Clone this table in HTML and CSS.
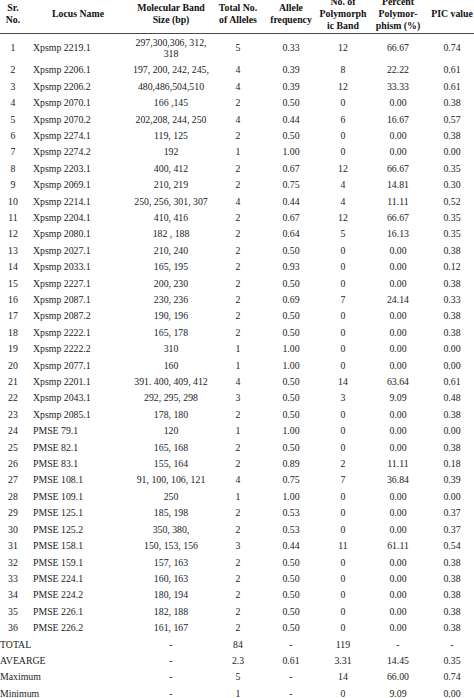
FILE: index.html
```html
<!DOCTYPE html>
<html>
<head>
<meta charset="utf-8">
<link rel="stylesheet" href="styles.css">
</head>
<body>
<table class="data">
<colgroup>
<col class="c-sr"><col class="c-locus"><col class="c-band"><col class="c-total"><col class="c-freq"><col class="c-poly"><col class="c-pct"><col class="c-pic">
</colgroup>
<thead>
<tr>
<th>Sr.<br>No.</th>
<th>Locus Name</th>
<th>Molecular Band<br>Size (bp)</th>
<th>Total No.<br>of Alleles</th>
<th>Allele<br>frequency</th>
<th>No. of<br>Polymorph<br>ic Band</th>
<th>Percent<br>Polymor-<br>phism (%)</th>
<th>PIC value</th>
</tr>
</thead>
<tbody>
<tr><td>1</td><td class="name">Xpsmp 2219.1</td><td>297,300,306, 312,<br>318</td><td>5</td><td>0.33</td><td>12</td><td>66.67</td><td>0.74</td></tr>
<tr><td>2</td><td class="name">Xpsmp 2206.1</td><td>197, 200, 242, 245,</td><td>4</td><td>0.39</td><td>8</td><td>22.22</td><td>0.61</td></tr>
<tr><td>3</td><td class="name">Xpsmp 2206.2</td><td>480,486,504,510</td><td>4</td><td>0.39</td><td>12</td><td>33.33</td><td>0.61</td></tr>
<tr><td>4</td><td class="name">Xpsmp 2070.1</td><td>166 ,145</td><td>2</td><td>0.50</td><td>0</td><td>0.00</td><td>0.38</td></tr>
<tr><td>5</td><td class="name">Xpsmp 2070.2</td><td>202,208, 244, 250</td><td>4</td><td>0.44</td><td>6</td><td>16.67</td><td>0.57</td></tr>
<tr><td>6</td><td class="name">Xpsmp 2274.1</td><td>119, 125</td><td>2</td><td>0.50</td><td>0</td><td>0.00</td><td>0.38</td></tr>
<tr><td>7</td><td class="name">Xpsmp 2274.2</td><td>192</td><td>1</td><td>1.00</td><td>0</td><td>0.00</td><td>0.00</td></tr>
<tr><td>8</td><td class="name">Xpsmp 2203.1</td><td>400, 412</td><td>2</td><td>0.67</td><td>12</td><td>66.67</td><td>0.35</td></tr>
<tr><td>9</td><td class="name">Xpsmp 2069.1</td><td>210, 219</td><td>2</td><td>0.75</td><td>4</td><td>14.81</td><td>0.30</td></tr>
<tr><td>10</td><td class="name">Xpsmp 2214.1</td><td>250, 256, 301, 307</td><td>4</td><td>0.44</td><td>4</td><td>11.11</td><td>0.52</td></tr>
<tr><td>11</td><td class="name">Xpsmp 2204.1</td><td>410, 416</td><td>2</td><td>0.67</td><td>12</td><td>66.67</td><td>0.35</td></tr>
<tr><td>12</td><td class="name">Xpsmp 2080.1</td><td>182 , 188</td><td>2</td><td>0.64</td><td>5</td><td>16.13</td><td>0.35</td></tr>
<tr><td>13</td><td class="name">Xpsmp 2027.1</td><td>210, 240</td><td>2</td><td>0.50</td><td>0</td><td>0.00</td><td>0.38</td></tr>
<tr><td>14</td><td class="name">Xpsmp 2033.1</td><td>165, 195</td><td>2</td><td>0.93</td><td>0</td><td>0.00</td><td>0.12</td></tr>
<tr><td>15</td><td class="name">Xpsmp 2227.1</td><td>200, 230</td><td>2</td><td>0.50</td><td>0</td><td>0.00</td><td>0.38</td></tr>
<tr><td>16</td><td class="name">Xpsmp 2087.1</td><td>230, 236</td><td>2</td><td>0.69</td><td>7</td><td>24.14</td><td>0.33</td></tr>
<tr><td>17</td><td class="name">Xpsmp 2087.2</td><td>190, 196</td><td>2</td><td>0.50</td><td>0</td><td>0.00</td><td>0.38</td></tr>
<tr><td>18</td><td class="name">Xpsmp 2222.1</td><td>165, 178</td><td>2</td><td>0.50</td><td>0</td><td>0.00</td><td>0.38</td></tr>
<tr><td>19</td><td class="name">Xpsmp 2222.2</td><td>310</td><td>1</td><td>1.00</td><td>0</td><td>0.00</td><td>0.00</td></tr>
<tr><td>20</td><td class="name">Xpsmp 2077.1</td><td>160</td><td>1</td><td>1.00</td><td>0</td><td>0.00</td><td>0.00</td></tr>
<tr><td>21</td><td class="name">Xpsmp 2201.1</td><td>391. 400, 409, 412</td><td>4</td><td>0.50</td><td>14</td><td>63.64</td><td>0.61</td></tr>
<tr><td>22</td><td class="name">Xpsmp 2043.1</td><td>292, 295, 298</td><td>3</td><td>0.50</td><td>3</td><td>9.09</td><td>0.48</td></tr>
<tr><td>23</td><td class="name">Xpsmp 2085.1</td><td>178, 180</td><td>2</td><td>0.50</td><td>0</td><td>0.00</td><td>0.38</td></tr>
<tr><td>24</td><td class="name">PMSE 79.1</td><td>120</td><td>1</td><td>1.00</td><td>0</td><td>0.00</td><td>0.00</td></tr>
<tr><td>25</td><td class="name">PMSE 82.1</td><td>165, 168</td><td>2</td><td>0.50</td><td>0</td><td>0.00</td><td>0.38</td></tr>
<tr><td>26</td><td class="name">PMSE 83.1</td><td>155, 164</td><td>2</td><td>0.89</td><td>2</td><td>11.11</td><td>0.18</td></tr>
<tr><td>27</td><td class="name">PMSE 108.1</td><td>91, 100, 106, 121</td><td>4</td><td>0.75</td><td>7</td><td>36.84</td><td>0.39</td></tr>
<tr><td>28</td><td class="name">PMSE 109.1</td><td>250</td><td>1</td><td>1.00</td><td>0</td><td>0.00</td><td>0.00</td></tr>
<tr><td>29</td><td class="name">PMSE 125.1</td><td>185, 198</td><td>2</td><td>0.53</td><td>0</td><td>0.00</td><td>0.37</td></tr>
<tr><td>30</td><td class="name">PMSE 125.2</td><td>350, 380,</td><td>2</td><td>0.53</td><td>0</td><td>0.00</td><td>0.37</td></tr>
<tr><td>31</td><td class="name">PMSE 158.1</td><td>150, 153, 156</td><td>3</td><td>0.44</td><td>11</td><td>61.11</td><td>0.54</td></tr>
<tr><td>32</td><td class="name">PMSE 159.1</td><td>157, 163</td><td>2</td><td>0.50</td><td>0</td><td>0.00</td><td>0.38</td></tr>
<tr><td>33</td><td class="name">PMSE 224.1</td><td>160, 163</td><td>2</td><td>0.50</td><td>0</td><td>0.00</td><td>0.38</td></tr>
<tr><td>34</td><td class="name">PMSE 224.2</td><td>180, 194</td><td>2</td><td>0.50</td><td>0</td><td>0.00</td><td>0.38</td></tr>
<tr><td>35</td><td class="name">PMSE 226.1</td><td>182, 188</td><td>2</td><td>0.50</td><td>0</td><td>0.00</td><td>0.38</td></tr>
<tr><td>36</td><td class="name">PMSE 226.2</td><td>161, 167</td><td>2</td><td>0.50</td><td>0</td><td>0.00</td><td>0.38</td></tr>
<tr><td class="summary" colspan="2">TOTAL</td><td>-</td><td>84</td><td>-</td><td>119</td><td>-</td><td>-</td></tr>
<tr><td class="summary" colspan="2">AVEARGE</td><td>-</td><td>2.3</td><td>0.61</td><td>3.31</td><td>14.45</td><td>0.35</td></tr>
<tr><td class="summary" colspan="2">Maximum</td><td>-</td><td>5</td><td>-</td><td>14</td><td>66.00</td><td>0.74</td></tr>
<tr><td class="summary" colspan="2">Minimum</td><td>-</td><td>1</td><td>-</td><td>0</td><td>9.09</td><td>0.00</td></tr>
</tbody>
</table>
</body>
</html>
```
FILE: styles.css
```css
html, body {
  margin: 0;
  padding: 0;
  background: #ffffff;
  overflow: hidden;
}

body {
  width: 474px;
  height: 698px;
}

.data {
  width: 476px;
  margin-top: -4px;
  border-collapse: collapse;
  table-layout: fixed;
  font-family: "Liberation Serif", "Times New Roman", serif;
  font-size: 9.8px;
  color: #222;
}

.c-sr { width: 26px; }
.c-locus { width: 104px; }
.c-band { width: 82px; }
.c-total { width: 52px; }
.c-freq { width: 54px; }
.c-poly { width: 50px; }
.c-pct { width: 60px; }
.c-pic { width: 48px; }

.data th {
  font-weight: bold;
  color: #111;
  line-height: 12px;
  padding: 0 0 1px 0;
  text-align: center;
  vertical-align: middle;
  white-space: nowrap;
  border-bottom: 1.5px solid #4a4a4a;
}

.data td {
  line-height: 11.4px;
  padding: 2.5px 0;
  text-align: center;
  vertical-align: middle;
  white-space: nowrap;
}

.data td.name {
  text-align: left;
  padding-left: 7px;
}

.data td.summary {
  text-align: left;
  padding-left: 0;
}
```
